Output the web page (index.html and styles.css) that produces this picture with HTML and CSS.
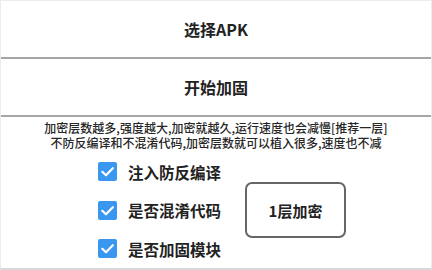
FILE: index.html
```html
<!DOCTYPE html>
<html lang="zh-CN">
<head>
<meta charset="utf-8">
<title>APK加固</title>
<link rel="stylesheet" href="styles.css">
</head>
<body>
<div class="screen">
  <div class="top-btn first">选择APK</div>
  <div class="top-btn second">开始加固</div>
  <div class="desc">
    <div class="line">加密层数越多,强度越大,加密就越久,运行速度也会减慢[推荐一层]</div>
    <div class="line">不防反编译和不混淆代码,加密层数就可以植入很多,速度也不减</div>
  </div>
  <div class="options">
    <div class="checks">
      <label class="row"><span class="box"><svg viewBox="0 0 19 19" width="19" height="19"><polyline points="4.3,9.8 8,13.3 14.8,6.2" fill="none" stroke="#fff" stroke-width="2.2" stroke-linecap="round" stroke-linejoin="round"/></svg></span><span class="txt">注入防反编译</span></label>
      <label class="row"><span class="box"><svg viewBox="0 0 19 19" width="19" height="19"><polyline points="4.3,9.8 8,13.3 14.8,6.2" fill="none" stroke="#fff" stroke-width="2.2" stroke-linecap="round" stroke-linejoin="round"/></svg></span><span class="txt">是否混淆代码</span></label>
      <label class="row"><span class="box"><svg viewBox="0 0 19 19" width="19" height="19"><polyline points="4.3,9.8 8,13.3 14.8,6.2" fill="none" stroke="#fff" stroke-width="2.2" stroke-linecap="round" stroke-linejoin="round"/></svg></span><span class="txt">是否加固模块</span></label>
    </div>
    <div class="layer-btn">1层加密</div>
  </div>
</div>
</body>
</html>
```
FILE: styles.css
```css
html, body {
  margin: 0;
  padding: 0;
  background: #fff;
}
body {
  font-family: "Noto Sans CJK SC", "Noto Sans", sans-serif;
  color: #222;
}
.screen {
  width: 432px;
  height: 270px;
  box-sizing: border-box;
  border: 1px solid #ececec;
  border-bottom: 2px solid #d8d8d8;
  display: flex;
  flex-direction: column;
  overflow: hidden;
}
.top-btn {
  display: flex;
  align-items: center;
  justify-content: center;
  font-size: 16px;
  font-weight: bold;
  color: #222;
  border-bottom: 2px solid #a6a6a6;
}
.top-btn.first {
  height: 57px;
}
.top-btn.second {
  height: 57px;
}
.desc {
  padding-top: 3px;
  text-align: center;
  font-size: 12px;
  line-height: 15px;
  font-weight: 500;
  color: #262626;
  white-space: nowrap;
}
.line {
  height: 15px;
}
.options {
  display: flex;
  align-items: center;
  padding-left: 97px;
  margin-top: 3px;
}
.checks {
  display: flex;
  flex-direction: column;
}
.row {
  display: flex;
  align-items: center;
  height: 38.5px;
}
.box {
  width: 19px;
  height: 19px;
  background: #3a97f0;
  border-radius: 2px;
  display: flex;
  margin-right: 11px;
}
.txt {
  font-size: 15.5px;
  font-weight: bold;
  color: #222;
}
.layer-btn {
  margin-left: 24px;
  width: 101px;
  height: 56px;
  box-sizing: border-box;
  border: 2px solid #666;
  border-radius: 7px;
  display: flex;
  align-items: center;
  justify-content: center;
  font-size: 15px;
  font-weight: bold;
  color: #222;
}
```
